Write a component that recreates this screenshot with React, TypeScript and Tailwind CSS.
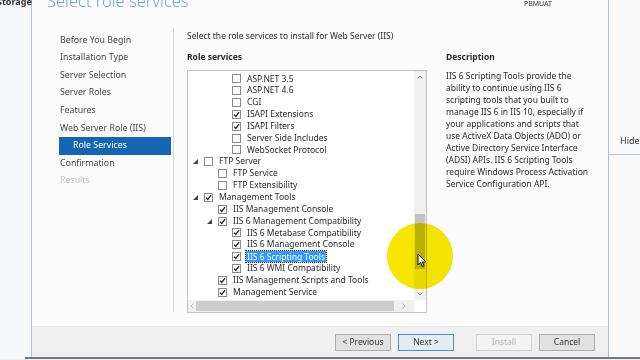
import React from 'react'

type Row = {
  label: string
  level: number
  checked: boolean
  arrow?: boolean
  selected?: boolean
}

const rows: Row[] = [
  { label: 'ASP.NET 3.5', level: 3, checked: false },
  { label: 'ASP.NET 4.6', level: 3, checked: false },
  { label: 'CGI', level: 3, checked: false },
  { label: 'ISAPI Extensions', level: 3, checked: true },
  { label: 'ISAPI Filters', level: 3, checked: true },
  { label: 'Server Side Includes', level: 3, checked: false },
  { label: 'WebSocket Protocol', level: 3, checked: false },
  { label: 'FTP Server', level: 1, checked: false, arrow: true },
  { label: 'FTP Service', level: 2, checked: false },
  { label: 'FTP Extensibility', level: 2, checked: false },
  { label: 'Management Tools', level: 1, checked: true, arrow: true },
  { label: 'IIS Management Console', level: 2, checked: true },
  { label: 'IIS 6 Management Compatibility', level: 2, checked: true, arrow: true },
  { label: 'IIS 6 Metabase Compatibility', level: 3, checked: true },
  { label: 'IIS 6 Management Console', level: 3, checked: true },
  { label: 'IIS 6 Scripting Tools', level: 3, checked: true, selected: true },
  { label: 'IIS 6 WMI Compatibility', level: 3, checked: true },
  { label: 'IIS Management Scripts and Tools', level: 2, checked: true },
  { label: 'Management Service', level: 2, checked: true },
]

const steps = [
  'Before You Begin',
  'Installation Type',
  'Server Selection',
  'Server Roles',
  'Features',
  'Web Server Role (IIS)',
  'Role Services',
  'Confirmation',
  'Results',
]

const descLines = [
  'IIS 6 Scripting Tools provide the',
  'ability to continue using IIS 6',
  'scripting tools that you built to',
  'manage IIS 6 in IIS 10, especially if',
  'your applications and scripts that',
  'use ActiveX Data Objects (ADO) or',
  'Active Directory Service Interface',
  '(ADSI) APIs. IIS 6 Scripting Tools',
  'require Windows Process Activation',
  'Service Configuration API.',
]

function Checkbox({ checked }: { checked: boolean }) {
  return (
    <div className="w-[9px] h-[9px] border border-[#8a8a8a] bg-white flex items-center justify-center shrink-0">
      {checked && (
        <svg width="7" height="7" viewBox="0 0 7 7">
          <path d="M1 3.6 L2.8 5.4 L6 1.2" stroke="#222" strokeWidth="1.3" fill="none" />
        </svg>
      )}
    </div>
  )
}

function TreeRow({ row }: { row: Row }) {
  // each level indents 14px, the arrow sits in a 14px slot before the box
  const pad = row.level === 1 ? 'pl-[2px]' : row.level === 2 ? 'pl-[16px]' : 'pl-[30px]'
  return (
    <div className={`flex items-center h-[11.85px] ${pad}`}>
      <div className="w-[14px] flex items-center justify-start pl-[3px]">
        {row.arrow && (
          <svg width="5" height="5" viewBox="0 0 5 5">
            <path d="M5 0 L5 5 L0 5 Z" fill="#444" />
          </svg>
        )}
      </div>
      <Checkbox checked={row.checked} />
      <span
        className={
          row.selected
            ? 'ml-[5px] px-[1px] bg-[#3399ff] text-white outline outline-1 outline-dotted outline-[#222] leading-[11px]'
            : 'ml-[6px] text-[#2a2a2a]'
        }
      >
        {row.label}
      </span>
    </div>
  )
}

export default function App() {
  return (
    <div
      className="relative w-[640px] h-[360px] overflow-hidden bg-[#f6f7f8] flex flex-col"
      style={{ fontFamily: '"Noto Sans", "Open Sans", sans-serif' }}
    >
      <div className="h-[357px] flex">
        {/* left strip of the server manager behind */}
        <div className="w-[31px] shrink-0 relative">
          <div className="absolute -top-[3px] -left-[3px] text-[9px] leading-[10px] font-bold text-[#333]">Storage</div>
        </div>

        {/* wizard window */}
        <div className="w-[578px] shrink-0 bg-[#fcfcfc] border-l border-r border-[#a9c3da] flex flex-col">
          <div className="h-[28px] flex justify-between">
            <div className="-mt-[7px] pl-[15px] text-[16.5px] font-light text-[#74a4cf] leading-[16px] h-[16px]">
              Select role services
            </div>
            <div className="pr-[56px] text-[7px] text-[#333] leading-[8px]">PBMUAT</div>
          </div>

          <div className="flex flex-1">
            {/* steps */}
            <div className="w-[142px] shrink-0 flex flex-col">
              <div className="flex-1 border-r border-[#d8d8d8] mb-[14px] pt-[3.5px] pl-[27px] pr-[2px]">
                {steps.map((s) => (
                  <div
                    key={s}
                    className={
                      s === 'Role Services'
                        ? 'h-[17.6px] flex items-center pl-[14px] bg-[#1565b5] text-white text-[8.8px]'
                        : s === 'Results'
                          ? 'h-[17.6px] flex items-center pl-[1px] text-[#c4c4c4] text-[8.8px]'
                          : 'h-[17.6px] flex items-center pl-[1px] text-[#444] text-[8.8px]'
                    }
                  >
                    {s}
                  </div>
                ))}
              </div>
            </div>

            {/* content */}
            <div className="flex-1 pl-[13px] flex flex-col text-[8.5px] text-[#2a2a2a]">
              <div className="h-[14px] mt-[1px] flex items-center">
                Select the role services to install for Web Server (IIS)
              </div>
              <div className="flex mt-[7px] gap-[19px]">
                <div className="w-[240px] flex flex-col">
                  <div className="h-[14px] flex items-center font-bold">Role services</div>
                  <div className="mt-[6px] h-[243px] border border-[#c3c3c3] bg-white flex flex-col">
                    <div className="flex flex-1 min-h-0">
                      <div className="flex-1 pt-[2px] overflow-hidden">
                        {rows.map((r) => (
                          <TreeRow key={r.label} row={r} />
                        ))}
                      </div>
                      <div className="w-[12px] bg-[#f0f0f0] flex flex-col items-center">
                        <div className="h-[12px] flex items-center justify-center">
                          <svg width="6" height="4" viewBox="0 0 6 4">
                            <path d="M0.5 3.5 L3 1 L5.5 3.5" stroke="#888" fill="none" />
                          </svg>
                        </div>
                        <div className="flex-1 w-full flex flex-col">
                          <div className="h-[131px]" />
                          <div className="h-[55px] mx-[1px] bg-[#c2c2c2]" />
                        </div>
                        <div className="h-[12px] flex items-center justify-center">
                          <svg width="6" height="4" viewBox="0 0 6 4">
                            <path d="M0.5 0.5 L3 3 L5.5 0.5" stroke="#888" fill="none" />
                          </svg>
                        </div>
                      </div>
                    </div>
                    <div className="h-[12px] bg-[#f0f0f0] flex items-center">
                      <div className="w-[8px] flex justify-center">
                        <svg width="4" height="6" viewBox="0 0 4 6">
                          <path d="M3.5 0.5 L1 3 L3.5 5.5" stroke="#bbb" fill="none" />
                        </svg>
                      </div>
                      <div className="w-[198px] h-[10px] bg-[#cdcdcd]" />
                      <div className="flex-1 flex justify-center">
                        <svg width="4" height="6" viewBox="0 0 4 6">
                          <path d="M0.5 0.5 L3 3 L0.5 5.5" stroke="#bbb" fill="none" />
                        </svg>
                      </div>
                      <div className="w-[12px] h-full bg-white" />
                    </div>
                  </div>
                </div>

                <div className="flex-1 flex flex-col">
                  <div className="h-[14px] flex items-center font-bold">Description</div>
                  <div className="mt-[6px] leading-[12px]">
                    {descLines.map((l) => (
                      <div key={l}>{l}</div>
                    ))}
                  </div>
                </div>
              </div>
            </div>
          </div>

          {/* button bar */}
          <div className="h-[31px] bg-[#f0f0f0] border-t border-[#e4e4e4] flex items-center justify-end pr-[13px] text-[8.5px]">
            <button className="w-[56px] h-[17px] border border-[#adadad] bg-[#e1e1e1] text-[#333]">
              &lt; Previous
            </button>
            <button className="ml-[7px] w-[56px] h-[17px] border border-[#4d90d0] bg-[#e5eef7] text-[#333]">
              Next &gt;
            </button>
            <button className="ml-[22px] w-[56px] h-[17px] border border-[#d0d0d0] bg-[#f4f4f4] text-[#b5b5b5]">
              Install
            </button>
            <button className="ml-[7px] w-[56px] h-[17px] border border-[#adadad] bg-[#e1e1e1] text-[#333]">
              Cancel
            </button>
          </div>
        </div>

        {/* right strip */}
        <div className="flex-1 bg-[#fafafa] flex flex-col">
          <div className="h-[131px]" />
          <div className="h-[24px] pl-[11px] flex items-center pb-[4px] text-[9px] text-[#333] border-b border-[#b7c6d4]">
            Hide
          </div>
        </div>
      </div>
      <div className="h-[2px] ml-[25px] bg-[#6f7a86]" />
      <div className="flex-1 bg-[#eef0f2]" />

      {/* cursor highlight */}
      <div className="absolute left-[387px] top-[223px] w-[66px] h-[66px] rounded-full bg-[#f6e600] mix-blend-multiply" />
      <svg className="absolute left-[417px] top-[253px]" width="10" height="15" viewBox="0 0 10 15">
        <path d="M1 1 L1 12 L3.6 9.6 L5.4 13.6 L7 12.9 L5.3 9 L8.8 9 Z" fill="#fff" stroke="#000" strokeWidth="1" />
      </svg>
    </div>
  )
}
